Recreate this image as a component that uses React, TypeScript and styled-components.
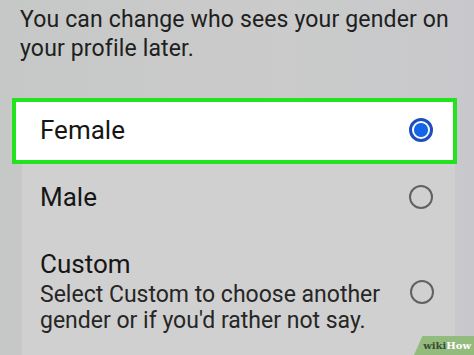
import { createGlobalStyle, styled } from "styled-components";

const GlobalStyle = createGlobalStyle`
  html, body {
    margin: 0;
    padding: 0;
    background: #c9cac9;
  }
  * {
    box-sizing: border-box;
  }
`;

type Option = {
  id: string;
  label: string;
  description?: string;
};

const options: Option[] = [
  { id: "female", label: "Female" },
  { id: "male", label: "Male" },
  {
    id: "custom",
    label: "Custom",
    description: "Select Custom to choose another gender or if you'd rather not say.",
  },
];

function App() {
  const selected = "female";

  return (
    <Screen>
      <GlobalStyle />
      <Intro>
        You can change who sees your gender on
        <br />
        your profile later.
      </Intro>
      <Panel>
        {options.map((opt) => (
          <OptionRow key={opt.id} $active={opt.id === selected} $tall={!!opt.description}>
            <OptionText>
              <OptionLabel>{opt.label}</OptionLabel>
              {opt.description && <OptionDesc>{opt.description}</OptionDesc>}
            </OptionText>
            <Radio $checked={opt.id === selected} $offset={opt.description ? 31 : 0} />
          </OptionRow>
        ))}
      </Panel>
      <Watermark>
        <span>wiki</span>
        <b>How</b>
      </Watermark>
    </Screen>
  );
}

export default App;

const Screen = styled.div`
  position: relative;
  width: 474px;
  height: 355px;
  overflow: hidden;
  background: linear-gradient(90deg, #c6c8c7 0px, #cacbca 60%, #c8c8cc 100%);
  font-family: Roboto, "Liberation Sans", sans-serif;
  color: #1e1e1e;
`;

const Intro = styled.p`
  margin: 0;
  padding: 5px 0 0 20px;
  font-size: 23px;
  letter-spacing: 0.15px;
  line-height: 29px;
  color: #202020;
  height: 98px;
`;

const Panel = styled.div`
  margin: 0 19px 0 22px;
  background: #d0d0d0;
  height: 257px;
  display: flex;
  flex-direction: column;
`;

const OptionRow = styled.div<{ $active: boolean; $tall: boolean }>`
  flex: none;
  display: flex;
  align-items: ${(p) => (p.$tall ? "flex-start" : "center")};
  justify-content: space-between;
  padding: ${(p) => (p.$active ? "0 20px 2px 24px" : "0 22px 0 18px")};
  height: ${(p) => (p.$active ? "66px" : p.$tall ? "125px" : "66px")};
  margin: ${(p) => (p.$active ? "0 -2px 0 -10px" : "0")};
  border: ${(p) => (p.$active ? "4px solid #22e31d" : "none")};
  background: ${(p) => (p.$active ? "#ffffff" : "transparent")};
  padding-top: ${(p) => (p.$tall ? "19px" : "0")};
`;

const OptionText = styled.div`
  display: flex;
  flex-direction: column;
`;

const OptionLabel = styled.div`
  font-size: 26px;
  line-height: 30px;
  color: #161616;
`;

const OptionDesc = styled.div`
  width: 370px;
  margin-top: 3px;
  font-size: 23px;
  line-height: 26px;
  color: #262626;
`;

const Radio = styled.span<{ $checked: boolean; $offset: number }>`
  flex: none;
  width: 24px;
  height: 24px;
  margin-top: ${(p) => p.$offset}px;
  border-radius: 50%;
  align-self: ${(p) => (p.$offset ? "flex-start" : "center")};
  border: ${(p) => (p.$checked ? "3px solid #1d4fbf" : "2.5px solid #5f6264")};
  background: ${(p) => (p.$checked ? "radial-gradient(circle, #1466e6 0 6.5px, #ffffff 7.5px)" : "transparent")};
`;

const Watermark = styled.div`
  position: absolute;
  right: 0;
  bottom: 0;
  width: 60px;
  height: 19px;
  background: #93bb7e;
  clip-path: polygon(14% 0, 100% 0, 100% 100%, 0 100%);
  display: flex;
  align-items: center;
  justify-content: flex-end;
  padding-right: 3px;
  font-family: "DejaVu Serif", "Liberation Serif", serif;
  font-size: 10px;
  font-weight: bold;
  span {
    color: #3a4a33;
  }
  b {
    color: #ffffff;
  }
`;
